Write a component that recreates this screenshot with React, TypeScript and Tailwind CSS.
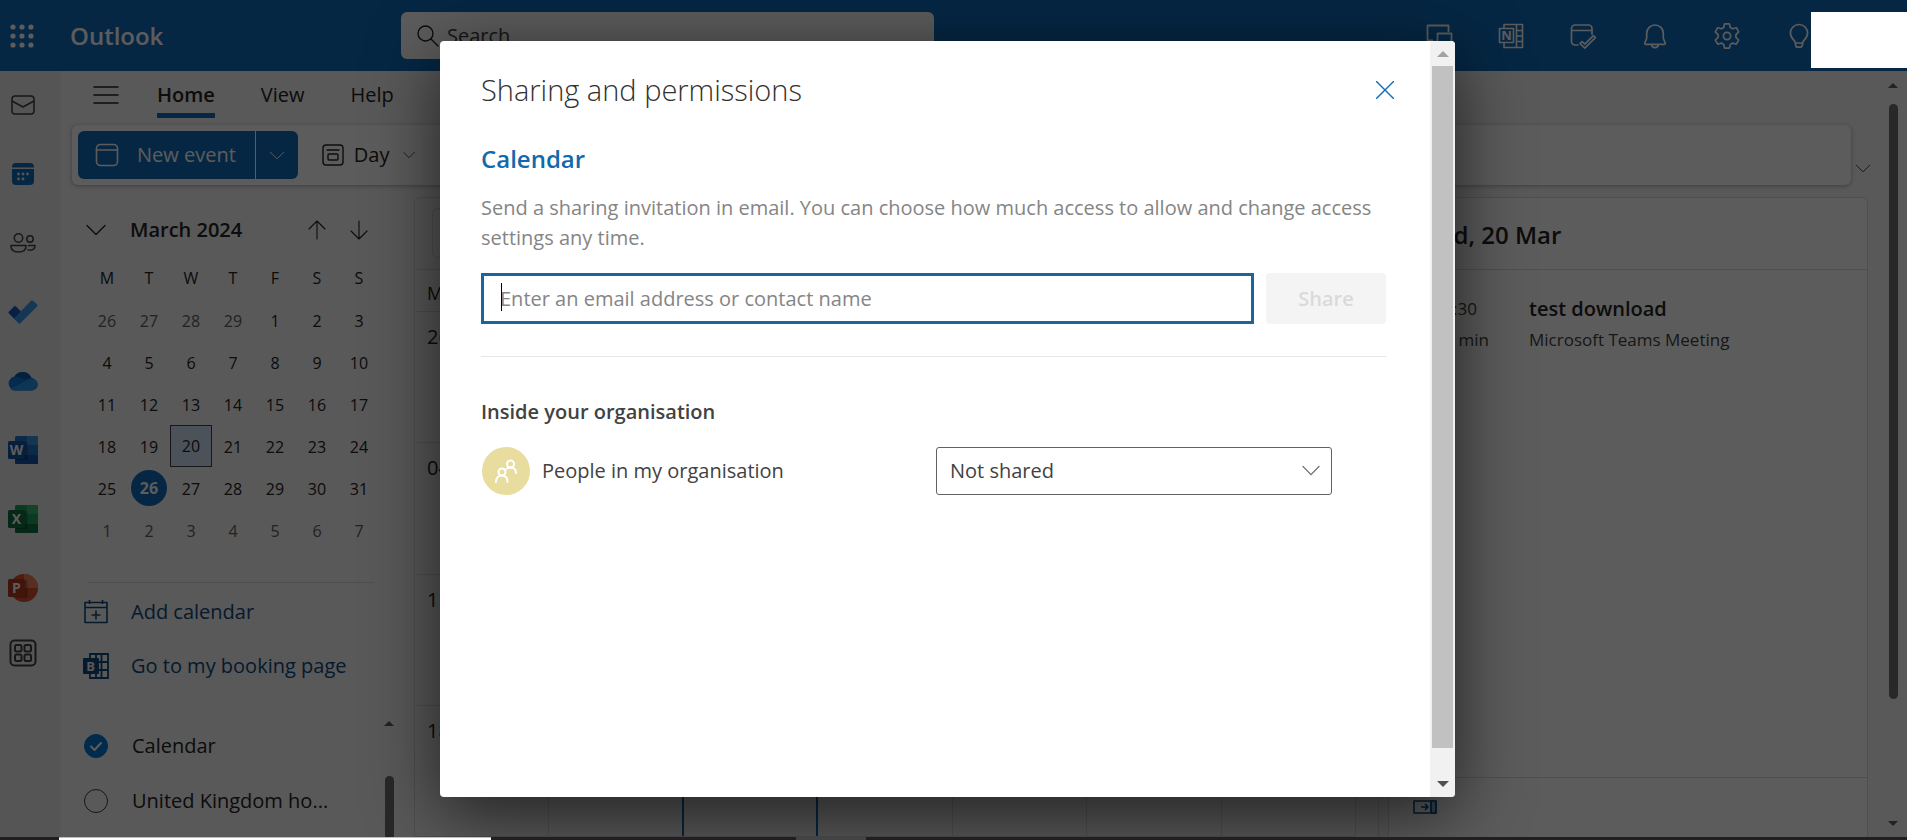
import { useState, type ReactNode } from 'react';
import { clsx } from 'clsx';

const stroke = { fill: 'none', stroke: 'currentColor', strokeLinecap: 'round', strokeLinejoin: 'round' } as const;

function Chevron({ className }: { className?: string }) {
  return (
    <svg viewBox="0 0 20 12" className={className} {...stroke} strokeWidth={1.3}>
      <path d="M1 1.500 10 10.500 19 1.500" />
    </svg>
  );
}

function Triangle({ down, className }: { down?: boolean; className?: string }) {
  return (
    <svg viewBox="0 0 12 6" className={clsx('shrink-0', className)} fill="currentColor">
      <path d={down ? 'M0 0h12L6 6z' : 'M6 0l6 6H0z'} />
    </svg>
  );
}

function WaffleIcon() {
  return (
    <svg viewBox="0 0 24 24" className="h-6 w-6" fill="currentColor">
      {[3, 12, 21].map((y) => [3, 12, 21].map((x) => <circle key={`${x}-${y}`} cx={x} cy={y} r="2.6" />))}
    </svg>
  );
}

function AppsIcon() {
  return (
    <svg viewBox="0 0 28 28" className="h-7 w-7" {...stroke} strokeWidth={2}>
      <rect x="1.500" y="1.500" width="25" height="25" rx="4" />
      <rect x="6" y="6" width="6.500" height="6.500" rx="1.500" />
      <rect x="15.500" y="6" width="6.500" height="6.500" rx="1.500" />
      <rect x="6" y="15.500" width="6.500" height="6.500" rx="1.500" />
      <rect x="15.500" y="15.500" width="6.500" height="6.500" rx="1.500" />
    </svg>
  );
}

function OfficeIcon({ letter, dark, mid, light, round }: { letter: string; dark: string; mid: string; light: string; round?: boolean }) {
  return (
    <svg viewBox="0 0 30 28" className="h-7 w-[30px]">
      {round ? (
        <>
          <circle cx="16" cy="14" r="14" fill={mid} />
          <path d="M16 0a14 14 0 0 1 14 14H16z" fill={light} />
        </>
      ) : (
        <>
          <rect x="7" width="23" height="28" rx="1.5" fill={mid} />
          <path d="M19 0h9.500a1.500 1.500 0 0 1 1.500 1.500V9H19z" fill={light} />
          <path d="M7 19h23v7.500a1.500 1.500 0 0 1-1.500 1.500h-20A1.500 1.500 0 0 1 7 26.500z" fill={dark} />
        </>
      )}
      <path d="M8 6h10a1.500 1.500 0 0 1 1.500 1.500v15A1.500 1.500 0 0 1 18 24H8z" fill="#000" opacity=".25" />
      <rect y="5" width="17" height="18" rx="1.5" fill={dark} />
      <text x="8.500" y="19" textAnchor="middle" fontSize="14" fontWeight="700" fill="#fff">
        {letter}
      </text>
    </svg>
  );
}

const RAIL: { label: string; icon: ReactNode }[] = [
  {
    label: 'Mail',
    icon: (
      <svg viewBox="0 0 24 20" className="h-5 w-6" {...stroke} strokeWidth={1.5}>
        <rect x="1" y="1" width="22" height="18" rx="3" />
        <path d="M1 6l11 6 11-6" />
      </svg>
    ),
  },
  {
    label: 'Calendar',
    icon: (
      <svg viewBox="0 0 22 22" className="h-[22px] w-[22px] text-[#0f6cbd]" fill="currentColor">
        <path d="M0 4a4 4 0 0 1 4-4h14a4 4 0 0 1 4 4v.5H0z" />
        <path d="M0 6h22v12a4 4 0 0 1-4 4H4a4 4 0 0 1-4-4z" />
        <g fill="#ebebeb">
          <circle cx="6.500" cy="11" r="1.400" />
          <circle cx="11" cy="11" r="1.400" />
          <circle cx="15.500" cy="11" r="1.400" />
          <circle cx="6.500" cy="16" r="1.400" />
          <circle cx="11" cy="16" r="1.400" />
        </g>
      </svg>
    ),
  },
  {
    label: 'People',
    icon: (
      <svg viewBox="0 0 26 20" className="h-5 w-[26px]" {...stroke} strokeWidth={1.5}>
        <circle cx="8.500" cy="5" r="4.200" />
        <circle cx="20" cy="6" r="3.200" />
        <path d="M1 12.500h15v.8c0 3.500-3 5.700-7.500 5.700S1 16.800 1 13.300z" />
        <path d="M18.500 12.500h6.500c0 3.200-2 4.700-5 4.700-.8 0-1.500-.1-2-.3" />
      </svg>
    ),
  },
  {
    label: 'To Do',
    icon: (
      <svg viewBox="0 0 30 24" className="h-6 w-[30px]">
        <path d="M1 11.500 6 6.500a1.500 1.500 0 0 1 2 0L17 15.500 12.500 23a1.500 1.500 0 0 1-2 0L1 13.500a1.400 1.400 0 0 1 0-2z" fill="#185abd" />
        <path d="M10.500 23a1.500 1.500 0 0 0 2 0L29 6.500a1.500 1.500 0 0 0 0-2L25 .7a1.500 1.500 0 0 0-2 0L6 18.500z" fill="#3a96e8" />
      </svg>
    ),
  },
  {
    label: 'OneDrive',
    icon: (
      <svg viewBox="0 0 30 20" className="h-5 w-[30px]">
        <path d="M7.500 19.500a7 7 0 0 1-1-13.900A9.500 9.500 0 0 1 23.400 6.800 6.500 6.500 0 0 1 23.500 19.500z" fill="#0f78d4" />
        <path d="M6.500 5.600A9.500 9.500 0 0 1 23.400 6.800c-2 0-3.600.8-4.900 2L11 6.200a8 8 0 0 0-4.500-.6z" fill="#0a5ba8" />
        <path d="M2.500 18 19 9.300c4-3.500 11-.8 11 4.200 0 3.300-2.800 6-6.500 6h-16c-2 0-3.700-.5-5-1.500z" fill="#2b94e8" />
      </svg>
    ),
  },
  { label: 'Word', icon: <OfficeIcon letter="W" dark="#1553a6" mid="#2273cc" light="#3c95e6" /> },
  { label: 'Excel', icon: <OfficeIcon letter="X" dark="#107040" mid="#1f9d5c" light="#35bd78" /> },
  { label: 'PowerPoint', icon: <OfficeIcon letter="P" dark="#b83b1d" mid="#d9512f" light="#f0805f" round /> },
];

const HEADER_ACTIONS: { label: string; icon: ReactNode }[] = [
  {
    label: 'Teams call',
    icon: (
      <svg viewBox="0 0 28 28" className="h-7 w-7" {...stroke} strokeWidth={1.8} strokeLinecap="butt">
        <path d="M8 18.500H2.500V3.500h21V10M5 18.500V23l5-4" />
        <rect x="12.500" y="11.500" width="14" height="11" />
      </svg>
    ),
  },
  {
    label: 'OneNote feed',
    icon: (
      <svg viewBox="0 0 28 28" className="h-7 w-7" {...stroke} strokeWidth={1.6}>
        <path d="M7 6V2.500h18.500v23H7V21M19.500 2.500v23M19.500 8.500h6M19.500 14h6M19.500 19.500h6" />
        <rect x="2.500" y="6.500" width="14" height="14" />
        <text x="9.500" y="18" textAnchor="middle" fontSize="13" fontWeight="700" fill="currentColor" stroke="none">
          N
        </text>
      </svg>
    ),
  },
  {
    label: 'My day',
    icon: (
      <svg viewBox="0 0 28 28" className="h-7 w-7" {...stroke} strokeWidth={1.7}>
        <path d="M9 23H6a3.500 3.500 0 0 1-3.500-3.500v-13A3.500 3.500 0 0 1 6 3h13.500A3.500 3.500 0 0 1 23 6.500V12M2.500 8.500H23" />
        <path d="m11 21.500 2-2 2.800 2.600 8.600-8.400 2 2-10.600 10.500z" />
      </svg>
    ),
  },
  {
    label: 'Notifications',
    icon: (
      <svg viewBox="0 0 28 28" className="h-7 w-7" {...stroke} strokeWidth={1.7}>
        <path d="M14 3a8.300 8.300 0 0 0-8.300 8.300v5L3.800 21c-.2.700.2 1.300.9 1.300h18.600c.7 0 1.100-.6.9-1.300l-1.900-4.700v-5A8.300 8.300 0 0 0 14 3zM10.800 22.500a3.200 3.200 0 0 0 6.400 0" />
      </svg>
    ),
  },
  {
    label: 'Settings',
    icon: (
      <svg viewBox="0 0 28 28" className="h-7 w-7" {...stroke} strokeWidth={1.7}>
        <path d="M11.600 1.800h4.800l.9 3.700 2.300 1.300 3.700-1.100 2.400 4.200-2.800 2.700v2.700l2.800 2.700-2.400 4.200-3.700-1.100-2.300 1.300-.9 3.700h-4.800l-.9-3.700-2.300-1.300-3.700 1.100L2.300 18l2.800-2.700v-2.700L2.300 9.900l2.400-4.200 3.700 1.100 2.300-1.300z" />
        <circle cx="14" cy="14" r="3.600" />
      </svg>
    ),
  },
  {
    label: 'Tips',
    icon: (
      <svg viewBox="0 0 28 28" className="h-7 w-7" {...stroke} strokeWidth={1.7}>
        <path d="M14 2.500a8.600 8.600 0 0 0-8.600 8.600c0 3.200 1.600 5.300 3.600 7.300.6.600.9 1.200 1.100 2l.7 3.300c.2 1 .8 1.500 1.700 1.500h3c.9 0 1.500-.5 1.700-1.500l.7-3.300c.2-.8.500-1.400 1.100-2 2-2 3.600-4.100 3.600-7.300A8.600 8.600 0 0 0 14 2.500zM10.200 21h7.600" />
      </svg>
    ),
  },
];

function Header() {
  return (
    <header className="flex h-[71px] shrink-0 items-center bg-[#0f6cbd] pl-1.5 text-white">
      <div className="flex w-[395px] items-center">
        <button aria-label="App launcher" className="flex w-8 justify-center">
          <WaffleIcon />
        </button>
        <span className="ml-8 text-2xl font-semibold">Outlook</span>
      </div>
      <label className="flex h-[47px] w-[533px] items-center gap-2 rounded-md bg-white px-4 text-[#242424]">
        <svg viewBox="0 0 22 22" className="h-[22px] w-[22px]" {...stroke} strokeWidth={1.4}>
          <circle cx="8.500" cy="8.500" r="7.500" />
          <path d="m14 14 7 7" />
        </svg>
        <input aria-label="Search" placeholder="Search" className="min-w-0 flex-1 text-xl outline-none placeholder:text-[#424242]" />
      </label>
      <div className="flex flex-1 justify-end gap-11 pr-[94px]">
        {HEADER_ACTIONS.map((action) => (
          <button key={action.label} aria-label={action.label}>
            {action.icon}
          </button>
        ))}
      </div>
    </header>
  );
}

function Ribbon() {
  return (
    <div className="shrink-0">
      <nav className="flex h-[54px] items-start gap-[46px] pt-[9px] pl-8 text-xl text-[#242424]">
        <button aria-label="Toggle navigation" className="flex h-[30px] items-center">
          <svg viewBox="0 0 26 18" className="h-[18px] w-[26px]" {...stroke} strokeWidth={1.5}>
            <path d="M1 1h24M1 9h24M1 17h24" />
          </svg>
        </button>
        <a href="#home" className="-ml-2 border-b-[5px] border-[#0f6cbd] pb-[3px] leading-[30px] font-semibold">
          Home
        </a>
        <a href="#view" className="leading-[30px]">
          View
        </a>
        <a href="#help" className="leading-[30px]">
          Help
        </a>
      </nav>
      <div className="flex items-end">
        <div className="ml-[11px] flex h-[60px] flex-1 items-center rounded-md bg-white px-[6px] text-xl shadow-[0_1px_4px_rgba(0,0,0,0.3)]">
          <div className="flex h-12 rounded-md bg-[#0f6cbd] text-white">
            <button className="flex items-center gap-[18px] border-r border-white pr-[19px] pl-[17px]">
              <svg viewBox="0 0 24 24" className="h-6 w-6" {...stroke} strokeWidth={1.6}>
                <rect x="1.500" y="1.500" width="21" height="21" rx="4" />
                <path d="M1.500 7h21" />
              </svg>
              New event
            </button>
            <button aria-label="New event options" className="flex w-[42px] items-center justify-center">
              <Chevron className="h-[9px] w-4" />
            </button>
          </div>
          <button className="ml-6 flex items-center gap-[10px] text-[#242424]">
            <svg viewBox="0 0 22 22" className="h-[22px] w-[22px]" {...stroke} strokeWidth={1.4}>
              <rect x="1" y="1" width="20" height="20" rx="3" />
              <path d="M5 6h12" />
              <rect x="6" y="10" width="10" height="6" rx="1" />
            </svg>
            Day
            <Chevron className="ml-1 h-2 w-3" />
          </button>
        </div>
        <button aria-label="Ribbon options" className="mr-3 mb-3 flex w-6 justify-center text-[#424242]">
          <Chevron className="h-[9px] w-4" />
        </button>
      </div>
    </div>
  );
}

const WEEKS = [
  [26, 27, 28, 29, 1, 2, 3],
  [4, 5, 6, 7, 8, 9, 10],
  [11, 12, 13, 14, 15, 16, 17],
  [18, 19, 20, 21, 22, 23, 24],
  [25, 26, 27, 28, 29, 30, 31],
  [1, 2, 3, 4, 5, 6, 7],
];

function MiniCalendar() {
  return (
    <section className="pl-[25px]">
      <div className="flex h-[54px] items-center">
        <button aria-label="Collapse month">
          <Chevron className="h-3 w-5" />
        </button>
        <h2 className="ml-6 flex-1 text-xl font-semibold">March 2024</h2>
        <button aria-label="Previous month" className="flex w-[42px] justify-center">
          <svg viewBox="0 0 18 20" className="h-5 w-[18px]" {...stroke} strokeWidth={1.1}>
            <path d="M9 19V1M1 9l8-8 8 8" />
          </svg>
        </button>
        <button aria-label="Next month" className="mr-[34px] flex w-[42px] justify-center">
          <svg viewBox="0 0 18 20" className="h-5 w-[18px]" {...stroke} strokeWidth={1.1}>
            <path d="M9 1v18M1 11l8 8 8-8" />
          </svg>
        </button>
      </div>
      <table className="w-[294px] table-fixed text-center text-base">
        <thead>
          <tr>
            {['M', 'T', 'W', 'T', 'F', 'S', 'S'].map((day, i) => (
              <th key={i} className="h-[42px] font-normal">
                {day}
              </th>
            ))}
          </tr>
        </thead>
        <tbody>
          {WEEKS.map((week, row) => (
            <tr key={row}>
              {week.map((day) => {
                const outside = (row === 0 && day > 20) || row === 5;
                const selected = row === 3 && day === 20;
                const today = row === 4 && day === 26;
                return (
                  <td key={day} className="h-[42px] p-0">
                    <button
                      className={clsx(
                        'inline-flex items-center justify-center align-middle',
                        outside && 'text-[#616161]',
                        selected && 'h-[42px] w-[42px] border border-[#424242] bg-[#cfe4fa]',
                        today && 'h-9 w-9 rounded-full bg-[#0f6cbd] font-bold text-white'
                      )}
                    >
                      {day}
                    </button>
                  </td>
                );
              })}
            </tr>
          ))}
        </tbody>
      </table>
    </section>
  );
}

function CalendarCheckbox({ label, defaultChecked }: { label: string; defaultChecked?: boolean }) {
  const [checked, setChecked] = useState(!!defaultChecked);
  return (
    <label className="flex h-[55px] items-center gap-6 text-xl text-[#242424]">
      <span className="relative flex">
        <input
          type="checkbox"
          checked={checked}
          onChange={(e) => setChecked(e.target.checked)}
          className="h-6 w-6 appearance-none rounded-full border border-[#424242] checked:border-[#0078d4] checked:bg-[#0078d4]"
        />
        {checked && (
          <svg viewBox="0 0 24 24" className="pointer-events-none absolute inset-0 h-6 w-6 text-white" {...stroke} strokeWidth={2}>
            <path d="m7 12.500 3.500 3.500L17 9" />
          </svg>
        )}
      </span>
      {label}
    </label>
  );
}

function NavigationPane() {
  return (
    <aside className="flex w-[353px] shrink-0 flex-col overflow-hidden pt-[18px] text-[#242424]">
      <MiniCalendar />
      <div className="mt-[31px] mr-10 ml-[26px] border-t border-[#d8d8d8]" />
      <div className="flex flex-col pt-[2px] pl-[22px] text-xl text-[#0f4a7c]">
        <a href="#add-calendar" className="flex h-[54px] items-center gap-[22px]">
          <svg viewBox="0 0 26 26" className="h-[26px] w-[26px]" {...stroke} strokeWidth={1.6} strokeLinecap="butt">
            <path d="M2 3.500h22v20H2zM2 8.500h22M6.500 1v4M19.500 1v4M13 11.500v9M8.500 16h9" />
          </svg>
          Add calendar
        </a>
        <a href="#booking" className="flex h-[54px] items-center gap-[22px]">
          <svg viewBox="0 0 26 26" className="h-[26px] w-[26px]">
            <path d="M7 1h18v24H7zM13 1v24M18.500 1v24M13 9h12M13 17h12" fill="none" stroke="currentColor" strokeWidth="1.8" />
            <rect y="5" width="16" height="16" rx="1" fill="currentColor" />
            <text x="7.500" y="18" textAnchor="middle" fontSize="13" fontWeight="700" fill="#f5f5f5">
              B
            </text>
          </svg>
          Go to my booking page
        </a>
      </div>
      <div className="mt-[23px] flex flex-1 justify-between">
        <div className="pt-[2px] pl-[23px]">
          <CalendarCheckbox label="Calendar" defaultChecked />
          <CalendarCheckbox label="United Kingdom ho..." />
        </div>
        <div className="mr-5 flex w-[10px] flex-col items-center text-[#616161]">
          <Triangle className="mt-[5px] h-[5px] w-[10px]" />
          <div className="mt-[50px] w-[9px] flex-1 rounded-t-full bg-[#707070]" />
        </div>
      </div>
    </aside>
  );
}

const MONTH_ROWS = ['26', '04', '11', '18'];

function MonthView() {
  return (
    <section className="mt-3 flex flex-1 flex-col rounded-t-md border border-b-0 border-[#dcdcdc] pr-[22px] text-[#242424]">
      <div className="flex h-[72px] items-center border-b border-[#dcdcdc] pl-[17px]">
        <button aria-label="Go to today" className="h-[50px] w-24 rounded-md border border-[#dcdcdc]" />
      </div>
      <div className="grid h-[43px] grid-cols-7 items-end border-b border-[#dcdcdc] pb-1 text-lg">
        {['Mon', 'Tue', 'Wed', 'Thu', 'Fri', 'Sat', 'Sun'].map((day) => (
          <span key={day} className="pl-3">
            {day}
          </span>
        ))}
      </div>
      {MONTH_ROWS.map((first) => (
        <div key={first} className="grid h-[132px] grid-cols-7 border-b border-[#dcdcdc] text-xl">
          {[0, 1, 2, 3, 4, 5, 6].map((col) => (
            <div
              key={col}
              className={clsx('border-r pt-[11px] pl-3', col === 1 || col === 2 ? 'border-r-2 border-[#0f6cbd]' : 'border-[#dcdcdc]')}
            >
              {col === 0 && first}
            </div>
          ))}
        </div>
      ))}
    </section>
  );
}

function DayAgenda() {
  return (
    <section className="mt-3 mr-[19px] ml-[9px] flex w-[480px] shrink-0 flex-col rounded-t-md border border-b-0 border-[#dcdcdc] bg-white text-[#242424]">
      <h2 className="flex h-[72px] items-center border-b border-[#dcdcdc] pt-[2px] pl-7 text-2xl font-semibold">Wed, 20 Mar</h2>
      <div className="flex flex-1 gap-10 pt-[23px] pl-11 text-[17px] leading-[31px] text-[#424242]">
        <div className="w-14 text-right">
          <p className="pr-3">11:30</p>
          <p>30 min</p>
        </div>
        <div>
          <p className="text-xl leading-[31px] font-semibold text-[#242424]">test download</p>
          <p>Microsoft Teams Meeting</p>
        </div>
      </div>
      <div className="flex h-[60px] items-start border-t border-[#dcdcdc] pt-[22px] pl-6 text-[#0f548c]">
        <button aria-label="Collapse agenda">
          <svg viewBox="0 0 24 14" className="h-[14px] w-6" {...stroke} strokeWidth={1.6} strokeLinecap="butt">
            <path d="M18 1h5v12h-5z" fill="#8ab8e0" />
            <path d="M1 1h22v12H1zM18 1v12M8 7h7M12 4l3 3-3 3" />
          </svg>
        </button>
      </div>
    </section>
  );
}

function SharingDialog() {
  return (
    <div className="absolute inset-0 z-10 flex items-center justify-center bg-black/64 pr-3 pb-[2px]">
      <div
        role="dialog"
        aria-labelledby="sharing-title"
        className="flex h-[90vh] w-full max-w-[1015px] overflow-hidden rounded-sm bg-white text-xl text-[#424242] shadow-[0_16px_70px_rgba(0,0,0,0.65)]"
      >
        <div className="flex-1 pt-7 pr-11 pl-[41px]">
          <div className="flex items-center justify-between">
            <h1 id="sharing-title" className="text-[29px] leading-[42px] font-light text-[#323130]">
              Sharing and permissions
            </h1>
            <button aria-label="Close" className="-mr-2 text-[#0f6cbd]">
              <svg viewBox="0 0 18 18" className="h-[18px] w-[18px]" {...stroke} strokeWidth={1.4}>
                <path d="m0 0 18 18M18 0 0 18" />
              </svg>
            </button>
          </div>
          <h2 className="mt-[30px] text-2xl leading-9 font-semibold text-[#1169ae]">Calendar</h2>
          <p className="mt-4 leading-[30px] text-[#858585]">
            Send a sharing invitation in email. You can choose how much access to allow and change access settings any time.
          </p>
          <div className="mt-5 flex gap-3">
            <div className="relative flex-1">
              <input
                aria-label="Email address or contact name"
                placeholder="Enter an email address or contact name"
                className="h-[51px] w-full border-[3px] border-[#17669f] px-4 outline-none placeholder:text-[#858585]"
              />
              <span className="absolute top-[10px] left-5 h-7 w-px bg-black" />
            </div>
            <button disabled className="h-[51px] w-[120px] rounded-sm bg-[#f4f4f4] font-semibold text-[#dadada]">
              Share
            </button>
          </div>
          <hr className="mt-8 border-[#e6e6e6]" />
          <h3 className="mt-10 leading-[30px] font-semibold">Inside your organisation</h3>
          <div className="mt-5 mr-[54px] flex items-center">
            <span className="ml-px flex h-12 w-12 items-center justify-center rounded-full bg-[#e8dc9e] text-white">
              <svg viewBox="0 0 24 24" className="h-6 w-6" {...stroke} strokeWidth={2}>
                <circle cx="16.500" cy="5" r="3.500" />
                <circle cx="8" cy="13" r="3.500" />
                <path d="M2 23c0-4 2.500-6.500 6-6.500s5.500 2.500 5.500 6.500M12.500 9.800c1-.9 2.400-1.300 4-1.300 3.500 0 5.500 2.200 5.500 5.500" />
              </svg>
            </span>
            <label htmlFor="org-access" className="ml-3 flex-1">
              People in my organisation
            </label>
            <div className="relative w-[396px]">
              <select id="org-access" className="h-12 w-full appearance-none rounded-[3px] border border-[#616161] bg-white px-[13px]">
                <option>Not shared</option>
                <option>Can view when I'm busy</option>
                <option>Can view titles and locations</option>
                <option>Can view all details</option>
              </select>
              <Chevron className="pointer-events-none absolute top-[18px] right-3 h-[11px] w-[18px] text-[#616161]" />
            </div>
          </div>
        </div>
        <div className="flex w-[25px] flex-col items-center bg-[#f1f1f1]">
          <Triangle className="mt-[10px] h-[6px] w-3 text-[#a3a3a3]" />
          <div className="mt-[9px] w-[21px] flex-1 bg-[#c1c1c1]" />
          <Triangle down className="mt-[33px] mb-[10px] h-[6px] w-3 text-[#505050]" />
        </div>
      </div>
    </div>
  );
}

export default function App() {
  return (
    <div className="relative flex h-screen flex-col overflow-hidden bg-[#f5f5f5] font-['Segoe_UI','Open_Sans',sans-serif]">
      <Header />
      <div className="flex min-h-0 flex-1">
        <nav className="flex w-[61px] shrink-0 flex-col items-center gap-[37px] bg-[#ebebeb] pt-5 pr-[15px] text-[#424242]">
          <div className="flex flex-col items-center gap-[41px]">
            {RAIL.map((item) => (
              <a key={item.label} href="#app" aria-label={item.label} className="flex h-7 shrink-0 items-center">
                {item.icon}
              </a>
            ))}
          </div>
          <button aria-label="More apps">
            <AppsIcon />
          </button>
        </nav>
        <main className="flex min-w-0 flex-1 flex-col overflow-hidden">
          <Ribbon />
          <div className="flex min-h-0 flex-1 overflow-hidden">
            <NavigationPane />
            <MonthView />
            <DayAgenda />
          </div>
        </main>
        <div className="flex w-5 flex-col items-center pt-3 pr-2 text-[#616161]">
          <Triangle className="h-[5px] w-[10px]" />
          <div className="mt-4 w-[9px] flex-1 rounded-full bg-[#707070]" />
          <Triangle down className="mt-[122px] mb-[11px] h-[5px] w-[10px]" />
        </div>
      </div>
      <div className="z-20 flex h-[3px] shrink-0 bg-[#231f20]">
        <div className="ml-[59px] w-[432px] border-t border-[#bdbdbd] bg-white" />
        <div className="ml-[305px] w-[70px] bg-[#444]" />
      </div>
      <SharingDialog />
      <div className="absolute top-3 right-0 z-20 h-14 w-24 bg-white" />
    </div>
  );
}
